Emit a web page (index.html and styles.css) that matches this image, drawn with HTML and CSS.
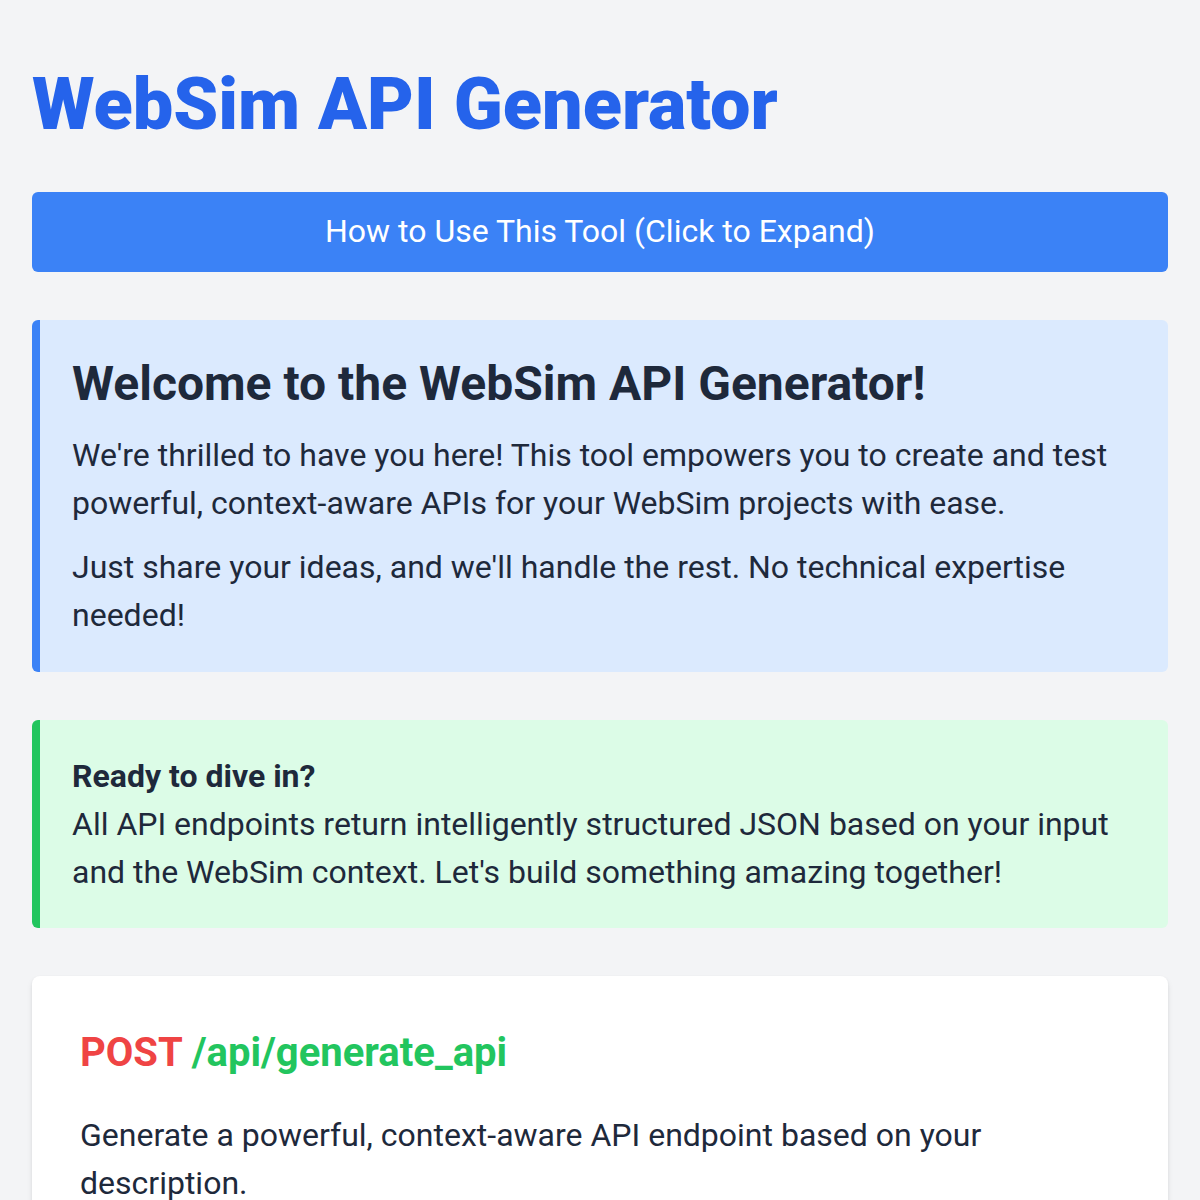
FILE: index.html
```html
<!DOCTYPE html>
<html lang="en">
<head>
<meta charset="utf-8">
<title>WebSim API Generator</title>
<link rel="stylesheet" href="styles.css">
</head>
<body>
<div class="container">
  <h1 class="title">WebSim API Generator</h1>
  <button class="toggle">How to Use This Tool (Click to Expand)</button>
  <section class="welcome">
    <h2>Welcome to the WebSim API Generator!</h2>
    <p>We're thrilled to have you here! This tool empowers you to create and test powerful, context-aware APIs for your WebSim projects with ease.</p>
    <p>Just share your ideas, and we'll handle the rest. No technical expertise needed!</p>
  </section>
  <section class="ready">
    <strong>Ready to dive in?</strong><br>
    All API endpoints return intelligently structured JSON based on your input and the WebSim context. Let's build something amazing together!
  </section>
  <section class="card">
    <h3><span class="method">POST</span> <span class="path">/api/generate_api</span></h3>
    <p>Generate a powerful, context-aware API endpoint based on your description.</p>
  </section>
</div>
</body>
</html>
```
FILE: styles.css
```css
html, body {
  margin: 0;
  padding: 0;
}
body {
  background: #f3f4f6;
  font-family: Roboto, "Noto Sans", sans-serif;
  color: #1e293b;
  font-size: 32px;
  line-height: 1.5;
}
.container {
  padding: 32px;
}
.title {
  margin: 33px 0 48px;
  font-size: 72px;
  line-height: 1.1;
  font-weight: 900;
  color: #2563eb;
}
.toggle {
  display: block;
  width: 100%;
  height: 80px;
  border: none;
  border-radius: 6px;
  background: #3b82f6;
  color: #ffffff;
  font-family: inherit;
  font-size: 32px;
  line-height: 1.5;
  padding: 0 0 2px;
  margin: 0 0 48px;
  cursor: pointer;
}
.welcome, .ready {
  border-left: 8px solid #3b82f6;
  border-radius: 6px;
  background: #dbeafe;
  padding: 32px;
  margin-bottom: 48px;
}
.welcome h2 {
  margin: 0 0 16px;
  font-size: 48px;
  line-height: 63px;
  font-weight: 700;
  color: #1e293b;
}
.welcome p {
  margin: 16px 0 0;
}
.welcome p:last-child {
  margin-bottom: 1px;
}
.ready {
  background: #dcfce7;
  border-left-color: #22c55e;
}
.card {
  background: #ffffff;
  border-radius: 8px;
  box-shadow: 0 4px 6px rgba(0,0,0,0.08), 0 1px 3px rgba(0,0,0,0.06);
  padding: 51px 48px 48px;
}
.card h3 {
  margin: 0 0 32px;
  font-size: 40px;
  line-height: 1.3;
  font-weight: 700;
}
.method { color: #ef4444; }
.path { color: #22c55e; }
.card p { margin: 0; }
```
